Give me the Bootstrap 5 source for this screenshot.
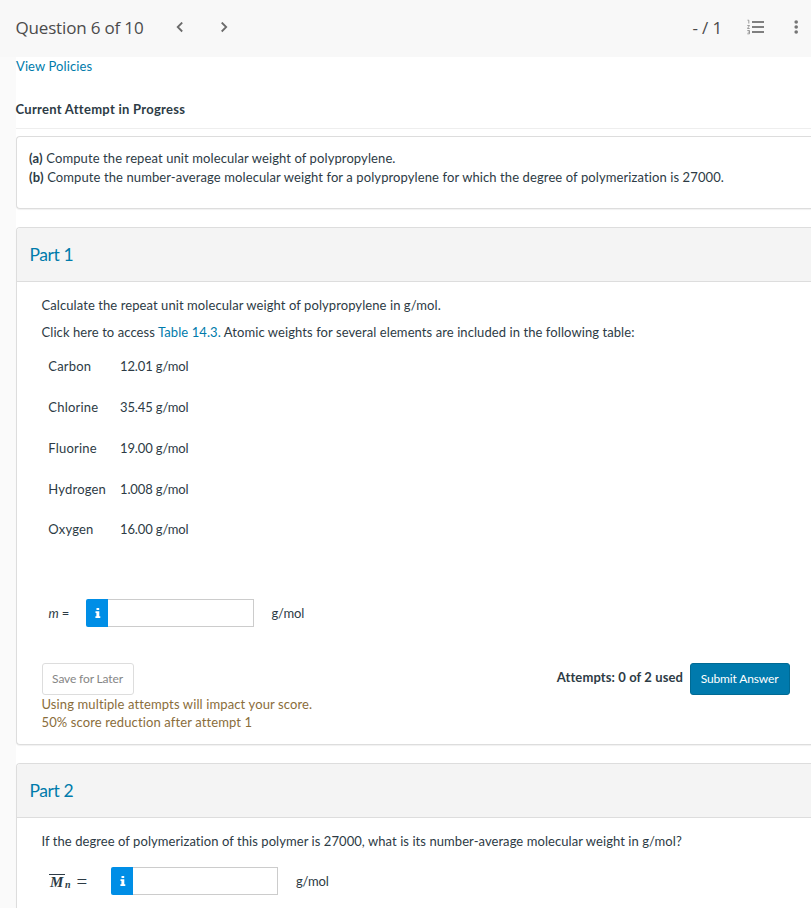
<!DOCTYPE html>
<html lang="en">
<head>
<meta charset="utf-8">
<meta name="viewport" content="width=device-width, initial-scale=1">
<title>Question 6 of 10</title>
<link href="https://cdn.jsdelivr.net/npm/bootstrap@5.3.0/dist/css/bootstrap.min.css" rel="stylesheet">
<style>
body{font-family:Lato,"Liberation Sans",sans-serif;font-size:13px;line-height:19px;letter-spacing:.08px;color:#2d3b45;background:#fafafa;height:908px;overflow:hidden}
a,.teal{color:#007bab;text-decoration:none}
.topbar{height:57px;background:#f8f8f8;color:#4b4b4b;font-family:"Open Sans",sans-serif;font-size:17px;line-height:24px;letter-spacing:-.17px;padding:0 8px 2px 15.500px}
.topbar svg{display:block;flex:none}
.q-title{width:158.500px}
.next-icon{margin-left:32px}
.menu-icon{margin:0 0 2px 25px}
.more-icon{margin:0 0 2px 25px}
.sheet{margin-left:16px;background:#fff;height:851px}
.policies{line-height:18px;height:20px;letter-spacing:.1px}
.attempt{margin:22px 0 0 -.500px;line-height:20px;padding-bottom:9px;border-bottom:1px solid #eee;letter-spacing:.28px}
.panel{border:1px solid #ddd;border-right:0;border-radius:4px 0 0 4px;box-shadow:0 1px 1px rgba(0,0,0,.06);background:#fff}
.panel-top{height:54px;background:#f4f4f4;border-bottom:1px solid #ddd;border-radius:3px 0 0 0;padding:0 12.500px 0;font-size:17.500px;letter-spacing:-.42px}
.intro{height:73px;margin-top:7px;padding:12px 12px 0;letter-spacing:.1px}
.intro b{letter-spacing:.2px}
.part1{height:518px;margin-top:18px}
.part2{height:160px;margin-top:18px;border-bottom:0;border-radius:4px 0 0 0}
.inner{padding:14px 21px 0 24.500px}
.elements{margin:4px 0 0 6.800px;border-collapse:collapse}
.elements td{padding:0;height:41px}
.elements tr:last-child td{height:40px;padding-bottom:2px}
.elements td:first-child{width:71.700px;letter-spacing:.2px}
.elements td:last-child{letter-spacing:-.13px}
.answer{height:28px}
.answer-m{margin:49px 0 0 7px}
.answer-m .sym,.answer-m .unit{padding-top:1px}
.answer-mn{margin:16px 0 0 6.500px}
.sym{width:37.500px;letter-spacing:-.1px}
.info{width:22px;height:28px;background:#008ee6;border-radius:2px 0 0 2px;padding:0 0 1px 2px}
.answer input{width:146px;height:28px;border:1px solid #ccc;border-left:0;outline:0;padding:0 6px;background:#fff}
.answer-mn input{width:145px}
.unit{margin-left:17.500px;letter-spacing:-.15px}
.answer-mn .unit{margin-left:18px}
.actions{margin-top:36px;height:32px}
.btn-later,.btn-submit{height:32px;padding:0 1px 0 0;font-size:12px;letter-spacing:-.14px;border-radius:3px}
.btn-later{width:92px;color:#868686;border:1px solid #ddd;background:#fff;margin-left:.500px}
.btn-submit{width:100px;color:#fff;border:1px solid #006a94;background:#007aad;margin-left:7px}
.used{letter-spacing:.1px;margin-bottom:3px}
.warn{color:#8a6d3b;line-height:18px;letter-spacing:.12px}
.part2 .inner{letter-spacing:.065px}
.mathsym{font-family:"Liberation Serif",serif;font-size:15px;letter-spacing:0;width:63px;padding-left:1px}
.mathsym .over{border-top:1px solid #2d3b45;line-height:14px;width:16px;padding-left:1px;font-style:italic;font-weight:bold}
.mathsym .subn{font-style:italic;font-weight:bold;font-size:10px;line-height:10px;margin:8px 0 0 0}
.mathsym .eq{font-size:19px;margin:1px 0 0 6px}
</style>
<script src="https://cdn.jsdelivr.net/npm/bootstrap@5.3.0/dist/js/bootstrap.bundle.min.js"></script>
</head>
<body>
<header class="topbar d-flex align-items-center">
  <div class="q-title">Question 6 of 10</div>
  <svg width="12" height="12" viewBox="0 0 12 12" fill="none" stroke="#6b6b6b" stroke-width="1.8"><path d="M8.200 .5 3.700 5l4.500 4.500"/></svg>
  <svg class="next-icon" width="12" height="12" viewBox="0 0 12 12" fill="none" stroke="#6b6b6b" stroke-width="1.8"><path d="M3.700 .5 8.200 5 3.700 9.500"/></svg>
  <span class="ms-auto">- / 1</span>
  <svg class="menu-icon" width="17" height="16" viewBox="0 0 17 16"><path d="M5 2h12v2H5zM5 7h12v2H5zM5 12h12v2H5z" fill="#808080"/><path d="M.5 1.200h1.300v3.300M.3 6.500h2.200L.5 9.500h2.200M.3 11.500h2.200v3.300H.3M.8 13.100h1.700" fill="none" stroke="#858585" stroke-width=".8"/></svg>
  <svg class="more-icon" width="14" height="16" viewBox="0 0 14 16" fill="#757575"><circle cx="7.200" cy="3" r="1.800"/><circle cx="7.200" cy="8" r="1.800"/><circle cx="7.200" cy="13" r="1.800"/></svg>
</header>
<main class="sheet">
  <div class="policies"><a href="#">View Policies</a></div>
  <div class="attempt fw-bold">Current Attempt in Progress</div>
  <section class="panel intro">
    <div><b>(a)</b> Compute the repeat unit molecular weight of polypropylene.</div>
    <div><b>(b)</b> Compute the number-average molecular weight for a polypropylene for which the degree of polymerization is 27000.</div>
  </section>
  <section class="panel part1">
    <div class="panel-top teal d-flex align-items-center">Part 1</div>
    <div class="inner">
      <div>Calculate the repeat unit molecular weight of polypropylene in g/mol.</div>
      <div class="mt-2">Click here to access <a href="#">Table 14.3.</a> Atomic weights for several elements are included in the following table:</div>
      <table class="elements">
        <tr><td>Carbon</td><td>12.01 g/mol</td></tr>
        <tr><td>Chlorine</td><td>35.45 g/mol</td></tr>
        <tr><td>Fluorine</td><td>19.00 g/mol</td></tr>
        <tr><td>Hydrogen</td><td>1.008 g/mol</td></tr>
        <tr><td>Oxygen</td><td>16.00 g/mol</td></tr>
      </table>
      <div class="answer answer-m d-flex align-items-center">
        <span class="sym"><i>m</i> =</span>
        <span class="info d-flex align-items-center justify-content-center"><svg width="6" height="10" viewBox="0 0 6 10" fill="#fff"><path d="M1.500 0h2.700v2H1.500zM.5 3.300h3.800v4.900h1V10H.4V8.200h1V5H.5z"/></svg></span>
        <input type="text" aria-label="m">
        <span class="unit">g/mol</span>
      </div>
      <div class="actions d-flex align-items-center">
        <button class="btn btn-later">Save for Later</button>
        <b class="used ms-auto">Attempts: 0 of 2 used</b>
        <button class="btn btn-submit">Submit Answer</button>
      </div>
      <div class="warn">Using multiple attempts will impact your score.<br>50% score reduction after attempt 1</div>
    </div>
  </section>
  <section class="panel part2">
    <div class="panel-top teal d-flex align-items-center">Part 2</div>
    <div class="inner">
      <div>If the degree of polymerization of this polymer is 27000, what is its number-average molecular weight in g/mol?</div>
      <div class="answer answer-mn d-flex align-items-center">
        <span class="mathsym d-flex align-items-center"><span class="over">M</span><span class="subn">n</span><span class="eq">=</span></span>
        <span class="info d-flex align-items-center justify-content-center"><svg width="6" height="10" viewBox="0 0 6 10" fill="#fff"><path d="M1.500 0h2.700v2H1.500zM.5 3.300h3.800v4.900h1V10H.4V8.200h1V5H.5z"/></svg></span>
        <input type="text" aria-label="Mn">
        <span class="unit">g/mol</span>
      </div>
    </div>
  </section>
</main>
</body>
</html>
